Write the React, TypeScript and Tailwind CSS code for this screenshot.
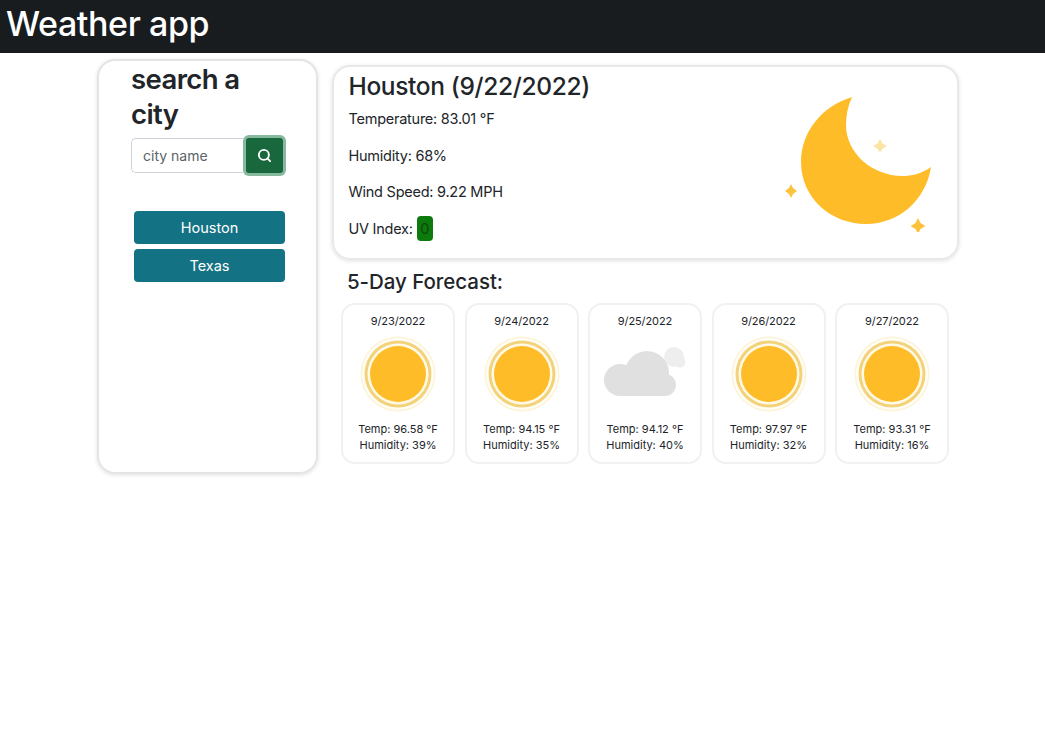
import { Search } from 'lucide-react'

const forecast = [
  { date: '9/23/2022', temp: '96.58', humidity: '39', icon: 'sun' },
  { date: '9/24/2022', temp: '94.15', humidity: '35', icon: 'sun' },
  { date: '9/25/2022', temp: '94.12', humidity: '40', icon: 'cloud' },
  { date: '9/26/2022', temp: '97.97', humidity: '32', icon: 'sun' },
  { date: '9/27/2022', temp: '93.31', humidity: '16', icon: 'sun' },
]

function Sun() {
  return (
    <svg viewBox="0 0 76 76" className="size-[76px]">
      <circle cx="38" cy="38" r="37.5" fill="#fdf3d6" />
      <circle cx="38" cy="38" r="36" fill="#fffdf6" />
      <circle cx="38" cy="38" r="33.5" fill="#f3d27c" />
      <circle cx="38" cy="38" r="30.5" fill="#fff9e6" />
      <circle cx="38" cy="38" r="28" fill="#febd28" />
    </svg>
  )
}

function Cloud() {
  return (
    <svg viewBox="0 0 84 56" className="w-[84px] h-[56px]">
      <g fill="#eeeeee">
        <circle cx="71" cy="11" r="10" />
        <circle cx="77" cy="16" r="5.5" />
      </g>
      <g fill="#e0e0e0">
        <circle cx="44" cy="27" r="22" />
        <circle cx="62" cy="39" r="11" />
        <circle cx="17" cy="34" r="16" />
        <rect x="17" y="30" width="45" height="20" />
      </g>
    </svg>
  )
}

function Moon() {
  return (
    <svg viewBox="0 0 160 140" className="w-[160px] h-[140px]">
      <path
        d="M73 5 C43 14 22 40 22 70 C22 106 52 132 87 132 C120 132 147 108 152 75 C142 82 132 84 124 84 C92 84 67 60 67 33 C67 23 69 14 73 5 Z"
        fill="#febd28"
      />
      <path d="M101 47 l2.5 4.5 l4.5 2.5 l-4.5 2.5 l-2.5 4.5 l-2.5 -4.5 l-4.5 -2.5 l4.5 -2.5 Z" fill="#fbe3a3" />
      <path d="M12 92 l2 4 l4 3 l-4 3 l-2 4 l-2 -4 l-4 -3 l4 -3 Z" fill="#fdc23c" />
      <path d="M139 126 l2.5 5 l5 3 l-5 3 l-2.5 5 l-2.5 -5 l-5 -3 l5 -3 Z" fill="#fdc23c" />
    </svg>
  )
}

export default function App() {
  return (
    <div className="min-h-[751px] bg-white text-[#212529] font-['Inter',sans-serif]">
      <header className="h-[53px] bg-[#191c1f] px-[6px] pb-[5px] flex items-center">
        <h1 className="text-[34px] font-medium leading-none tracking-[-0.4px] text-white">Weather app</h1>
      </header>

      <div className="flex gap-[14px] pl-[97px]">
        <aside className="w-[221px] h-[415px] mt-[6px] rounded-[18px] border-2 border-[#e4e4e4] shadow-[0_1px_4px_rgba(0,0,0,0.12)] pl-[32px]">
          <h2 className="w-[140px] mt-[1px] text-[27.5px] font-[560] leading-[35px] tracking-[-0.6px]">search a city</h2>
          <div className="flex mt-[6px]">
            <div className="w-[112px] h-[35px] border border-[#ced4da] border-r-0 rounded-l-[5px] pl-[11px] text-[14px] text-[#5c636a] flex items-center">
              city name
            </div>
            <button className="ml-[3px] w-[37px] h-[35px] bg-[#19673c] rounded-[3px] ring-[3px] ring-[#86b99e] flex items-center justify-center">
              <Search className="size-[15px] text-white" strokeWidth={3} />
            </button>
          </div>
          <div className="mt-[38px] ml-[3px] w-[151px] flex flex-col gap-[5px]">
            <button className="h-[33px] bg-[#147285] rounded-[4px] text-white text-[14.5px]">Houston</button>
            <button className="h-[33px] bg-[#147285] rounded-[4px] text-white text-[14.5px]">Texas</button>
          </div>
        </aside>

        <main className="w-[627px] mt-[12px]">
          <section className="h-[195px] rounded-[18px] border-2 border-[#e8e8e8] shadow-[0_1px_4px_rgba(0,0,0,0.12)] pl-[14.5px] pr-[20px] flex justify-between">
            <div>
              <h2 className="text-[24.5px] font-[540] leading-[38px] tracking-[-0.35px]">Houston (9/22/2022)</h2>
              <div className="mt-[3px] flex flex-col gap-[15.5px] text-[14.5px] leading-[21px] tracking-[-0.25px]">
                <p>Temperature: 83.01 °F</p>
                <p>Humidity: 68%</p>
                <p>Wind Speed: 9.22 MPH</p>
                <p className="h-[21px] flex items-center gap-[4px]">
                  UV Index:
                  <span className="w-[16px] h-[25px] shrink-0 rounded-[4px] bg-[#0d7a0d] text-[#0a4a0a] flex items-center justify-center">0</span>
                </p>
              </div>
            </div>
            <div className="self-end mb-[26px] -mr-[2px]">
              <Moon />
            </div>
          </section>

          <h3 className="ml-[15px] mt-[8px] text-[20.5px] font-medium leading-[28px] tracking-[-0.05px]">5-Day Forecast:</h3>

          <div className="ml-[9px] mt-[7px] flex gap-[9.5px]">
            {forecast.map((day) => (
              <div
                key={day.date}
                className="w-[114px] h-[161px] rounded-[14px] border-2 border-[#f1f1f1] flex flex-col items-center text-[11px] leading-[16px]"
              >
                <p className="mt-[8px] tracking-[-0.1px]">{day.date}</p>
                <div className="h-[76px] mt-[7px] flex items-center justify-center">
                  {day.icon === 'sun' ? <Sun /> : <Cloud />}
                </div>
                <p className="mt-[9px]">Temp: {day.temp} °F</p>
                <p>Humidity: {day.humidity}%</p>
              </div>
            ))}
          </div>
        </main>
      </div>
    </div>
  )
}
